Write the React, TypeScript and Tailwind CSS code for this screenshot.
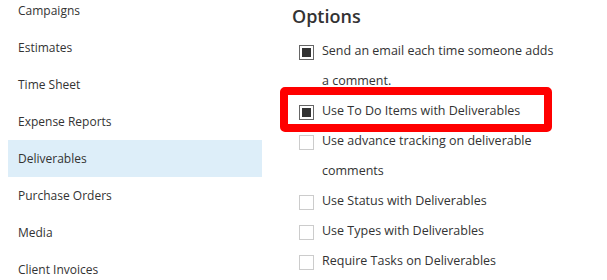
import { useState } from "react";

const navItems = [
  "Campaigns",
  "Estimates",
  "Time Sheet",
  "Expense Reports",
  "Deliverables",
  "Purchase Orders",
  "Media",
  "Client Invoices",
];

interface Option {
  id: string;
  label: string;
  checked: boolean;
  highlight?: boolean;
}

const initialOptions: Option[] = [
  { id: "email", label: "Send an email each time someone adds a comment.", checked: true },
  { id: "todo", label: "Use To Do Items with Deliverables", checked: true, highlight: true },
  { id: "tracking", label: "Use advance tracking on deliverable comments", checked: false },
  { id: "status", label: "Use Status with Deliverables", checked: false },
  { id: "types", label: "Use Types with Deliverables", checked: false },
  { id: "tasks", label: "Require Tasks on Deliverables", checked: false },
];

export default function App() {
  const [active, setActive] = useState("Deliverables");
  const [options, setOptions] = useState(initialOptions);

  function toggle(id: string) {
    setOptions((o) => o.map((x) => (x.id === id ? { ...x, checked: !x.checked } : x)));
  }

  return (
    <div className="flex h-[280px] w-[607px] overflow-hidden bg-white text-[#333] [font-family:'Open_Sans',sans-serif]">
      <nav className="w-[262px] shrink-0 pl-[8px] text-[12px]">
        <ul className="mt-[-8px]">
          {navItems.map((n) => (
            <li key={n}>
              <button
                onClick={() => setActive(n)}
                className={`block h-[37px] w-full pl-[10px] text-left leading-[37px] ${active === n ? "bg-[#ddeef9]" : ""}`}
              >
                {n}
              </button>
            </li>
          ))}
        </ul>
      </nav>

      <main className="pl-[30px] text-[12.5px]">
        <h2 className="pt-[3px] text-[18px] font-semibold leading-[26px] text-[#333]">Options</h2>
        <ul className="mt-[7px] pl-[7px]">
          {options.map((o) => (
            <li key={o.id} className="relative flex items-start">
              {o.highlight && (
                <span className="pointer-events-none absolute left-[-19px] top-[-9px] h-[45px] w-[272px] rounded-[5px] border-[8px] border-[#ff0000]" />
              )}
              <button
                onClick={() => toggle(o.id)}
                className={`mt-[9px] mr-[8px] flex h-[15px] w-[15px] shrink-0 items-center justify-center border ${o.checked ? "border-[#666]" : "border-[#ccc]"} bg-white`}
              >
                {o.checked && <span className="h-[9px] w-[9px] bg-[#333]" />}
              </button>
              <span className="w-[235px] leading-[30px]">{o.label}</span>
            </li>
          ))}
        </ul>
      </main>
    </div>
  );
}
